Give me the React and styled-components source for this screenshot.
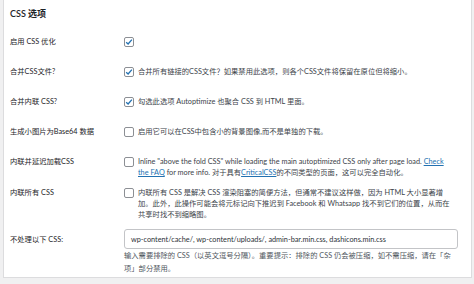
import React from 'react';
import styled, { createGlobalStyle } from 'styled-components';

const GlobalStyle = createGlobalStyle`
  html, body {
    margin: 0;
    padding: 0;
    background: #f0f0f1;
  }
  body {
    font-family: Lato, "Noto Sans CJK SC", sans-serif;
    color: #3c434a;
  }
`;

const Panel = styled.div`
  box-sizing: border-box;
  margin-left: 3px;
  width: 469px;
  height: 278px;
  background: #fff;
  border: 1px solid #dcdcde;
  border-top: 0;
  padding: 0 13px 0 6px;
`;

const Title = styled.h2`
  margin: 0;
  padding-top: 8px;
  height: 19px;
  font-size: 9px;
  line-height: 12px;
  font-weight: 600;
  color: #1d2327;
`;

const Row = styled.div`
  display: grid;
  grid-template-columns: 114px 1fr;
  min-height: 30px;
  box-sizing: border-box;
  padding-top: 9px;
  font-size: 7.3px;
  line-height: 11px;
`;

const Label = styled.div`
  color: #1d2327;
  padding-top: ${(p) => (p.$offset ? `${p.$offset}px` : '0')};
`;

const Option = styled.label`
  display: flex;
  align-items: flex-start;
  gap: 4px;
  padding-right: 3px;
`;

const Box = styled.span`
  flex: none;
  box-sizing: border-box;
  width: 10px;
  height: 10px;
  margin-top: 0.5px;
  border: 1px solid #8c8f94;
  border-radius: 2px;
  background: #fff;
  display: flex;
  align-items: center;
  justify-content: center;
`;

const Desc = styled.span`
  color: #3c434a;
`;

const Link = styled.a`
  color: #2271b1;
  text-decoration: underline;
`;

const Input = styled.div`
  box-sizing: border-box;
  height: 20px;
  border: 1px solid #c3c4c7;
  border-radius: 3px;
  padding: 0 6px;
  display: flex;
  align-items: center;
  color: #2c3338;
  white-space: nowrap;
  overflow: hidden;
`;

const Help = styled.p`
  margin: 1px 0 0;
  line-height: 12.5px;
  color: #50575e;
`;

const Checkbox = ({ checked }) => (
  <Box>
    {checked && (
      <svg width="8" height="8" viewBox="0 0 8 8">
        <path d="M1.2 4.2 L3.1 6 L6.9 1.6" fill="none" stroke="#2271b1" strokeWidth="1.3" />
      </svg>
    )}
  </Box>
);

const CheckRow = ({ label, checked, children }) => (
  <Row>
    <Label>{label}</Label>
    <Option>
      <Checkbox checked={checked} />
      {children && <Desc>{children}</Desc>}
    </Option>
  </Row>
);

export default function App() {
  return (
    <>
      <GlobalStyle />
      <Panel>
        <Title>CSS 选项</Title>
        <CheckRow label="启用 CSS 优化" checked />
        <CheckRow label="合并CSS文件?" checked>
          合并所有链接的CSS文件？如果禁用此选项，则各个CSS文件将保留在原位但将缩小。
        </CheckRow>
        <CheckRow label="合并内联 CSS?" checked>
          勾选此选项 Autoptimize 也聚合 CSS 到 HTML 里面。
        </CheckRow>
        <CheckRow label="生成小图片为Base64 数据">
          启用它可以在CSS中包含小的背景图像,而不是单独的下载。
        </CheckRow>
        <CheckRow label="内联并延迟加载CSS">
          Inline &quot;above the fold CSS&quot; while loading the main autoptimized CSS only after page load.{' '}
          <Link>Check the FAQ</Link> for more info. 对于具有<Link>CriticalCSS</Link>的不同类型的页面，这可以完全自动化。
        </CheckRow>
        <CheckRow label="内联所有 CSS">
          内联所有 CSS 是解决 CSS 渲染阻塞的简便方法，但通常不建议这样做，因为 HTML 大小显著增加。此外，此操作可能会将元标记向下推迟到 Facebook 和 Whatsapp 找不到它们的位置，从而在共享时找不到缩略图。
        </CheckRow>
        <Row>
          <Label $offset={4.5}>不处理以下 CSS:</Label>
          <div>
            <Input>wp-content/cache/, wp-content/uploads/, admin-bar.min.css, dashicons.min.css</Input>
            <Help>
              输入需要排除的 CSS（以英文逗号分隔）。重要提示：排除的 CSS 仍会被压缩，如不需压缩，请在「杂项」部分禁用。
            </Help>
          </div>
        </Row>
      </Panel>
    </>
  );
}
